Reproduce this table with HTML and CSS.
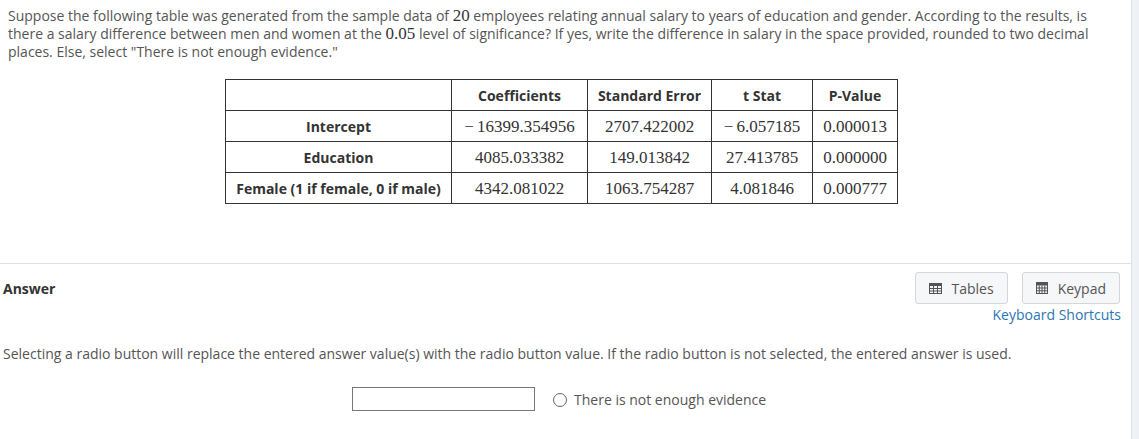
FILE: index.html
```html
<!DOCTYPE html>
<html>
<head>
<meta charset="utf-8">
<link rel="stylesheet" href="styles.css">
</head>
<body>
<div class="page">
  <main class="main">
    <section class="question">
      <p class="prompt">Suppose the following table was generated from the sample data of <span class="math">20</span> employees relating annual salary to years of education and gender. According to the results, is there a salary difference between men and women at the <span class="math">0.05</span> level of significance? If yes, write the difference in salary in the space provided, rounded to two decimal places. Else, select "There is not enough evidence."</p>
      <table class="reg">
        <thead>
          <tr>
            <th class="c-label"></th>
            <th class="c-coef">Coefficients</th>
            <th class="c-se">Standard Error</th>
            <th class="c-t">t Stat</th>
            <th class="c-p">P-Value</th>
          </tr>
        </thead>
        <tbody>
          <tr>
            <th>Intercept</th>
            <td>−&#8201;16399.354956</td>
            <td>2707.422002</td>
            <td>−&#8201;6.057185</td>
            <td>0.000013</td>
          </tr>
          <tr>
            <th>Education</th>
            <td>4085.033382</td>
            <td>149.013842</td>
            <td>27.413785</td>
            <td>0.000000</td>
          </tr>
          <tr>
            <th>Female (1 if female, 0 if male)</th>
            <td>4342.081022</td>
            <td>1063.754287</td>
            <td>4.081846</td>
            <td>0.000777</td>
          </tr>
        </tbody>
      </table>
    </section>
    <section class="answer">
      <div class="answer-head">
        <h2 class="answer-title">Answer</h2>
        <div class="tools">
          <div class="tool-buttons">
            <button class="tool-btn" type="button">
              <svg class="ico" width="13" height="11" viewBox="0 0 13 11" aria-hidden="true">
                <rect x="0.5" y="0.5" width="12" height="10" fill="none" stroke="#555" stroke-width="1"/>
                <rect x="0.5" y="0.5" width="12" height="2.5" fill="#555"/>
                <line x1="0.5" y1="5.5" x2="12.5" y2="5.5" stroke="#555"/>
                <line x1="0.5" y1="8" x2="12.5" y2="8" stroke="#555"/>
                <line x1="4.5" y1="0.5" x2="4.5" y2="10.5" stroke="#555"/>
                <line x1="8.5" y1="0.5" x2="8.5" y2="10.5" stroke="#555"/>
              </svg>
              <span>Tables</span>
            </button>
            <button class="tool-btn" type="button">
              <svg class="ico" width="12" height="12" viewBox="0 0 12 12" aria-hidden="true">
                <rect x="0.5" y="0.5" width="11" height="11" fill="none" stroke="#555"/>
                <rect x="0.5" y="0.5" width="11" height="3" fill="#555"/>
                <line x1="0.5" y1="6" x2="11.5" y2="6" stroke="#555"/>
                <line x1="0.5" y1="8.75" x2="11.5" y2="8.75" stroke="#555"/>
                <line x1="3.25" y1="3.5" x2="3.25" y2="11.5" stroke="#555"/>
                <line x1="6" y1="3.5" x2="6" y2="11.5" stroke="#555"/>
                <line x1="8.75" y1="3.5" x2="8.75" y2="11.5" stroke="#555"/>
              </svg>
              <span>Keypad</span>
            </button>
          </div>
          <a class="shortcuts" href="#">Keyboard Shortcuts</a>
        </div>
      </div>
      <p class="note">Selecting a radio button will replace the entered answer value(s) with the radio button value. If the radio button is not selected, the entered answer is used.</p>
      <div class="response">
        <input class="blank" type="text" aria-label="answer">
        <label class="radio"><span class="circle"></span><span>There is not enough evidence</span></label>
      </div>
    </section>
  </main>
  <aside class="side"></aside>
</div>
</body>
</html>
```

FILE: styles.css
```css
* { box-sizing: border-box; }
html, body { margin: 0; padding: 0; background: #fff; }
body {
  font-family: "Open Sans", "Liberation Sans", sans-serif;
  font-size: 14px;
  color: #555;
}
.page {
  display: flex;
  min-height: 439px;
}
.main {
  width: 1132px;
  border-right: 1px solid #dcdfe3;
}
.side {
  flex: 1;
  background: #eef2f6;
}
.question {
  padding: 7px 0 0 8px;
}
.prompt {
  margin: 0;
  line-height: 18px;
  width: 1090px;
}
.math {
  font-family: "Liberation Serif", "Times New Roman", serif;
  font-size: 17px;
  line-height: 1;
  color: #333;
}
.reg {
  border-collapse: collapse;
  margin: 18px 0 0 217px;
  font-family: "Liberation Serif", "Times New Roman", serif;
  font-size: 17px;
  color: #333;
}
.reg th, .reg td {
  border: 1px solid #333;
  height: 31px;
  padding: 0;
  text-align: center;
  vertical-align: middle;
}
.reg th {
  font-family: "Open Sans", "Liberation Sans", sans-serif;
  font-size: 14px;
  font-weight: 700;
  color: #333;
}
.reg td { padding-top: 1px; }
.c-label { width: 226px; }
.c-coef { width: 136px; }
.c-se { width: 124px; }
.c-t { width: 101px; }
.c-p { width: 85px; }
.answer {
  margin-top: 59px;
  border-top: 1px solid #e0e0e0;
}
.answer-head {
  display: flex;
  justify-content: space-between;
  align-items: flex-start;
  padding: 8px 11px 0 3px;
}
.answer-title {
  margin: 8px 0 0;
  font-size: 14px;
  font-weight: 700;
  color: #333;
  line-height: 18px;
}
.tools {
  display: flex;
  flex-direction: column;
  align-items: flex-end;
}
.tool-buttons {
  display: flex;
  gap: 14px;
}
.tool-btn {
  display: flex;
  align-items: center;
  gap: 10px;
  height: 32px;
  padding: 0 13px 0 13px;
  background: #f6f7f9;
  border: 1px solid #d3d7dc;
  border-radius: 3px;
  font-family: "Open Sans", "Liberation Sans", sans-serif;
  font-size: 14px;
  color: #555;
}
.tool-btn .ico { display: block; }
.shortcuts {
  margin-top: 1px;
  margin-right: -1px;
  color: #2a76b3;
  text-decoration: none;
  font-size: 14px;
  line-height: 20px;
}
.note {
  margin: 19px 0 0 3px;
  line-height: 20px;
}
.response {
  display: flex;
  align-items: center;
  margin: 23px 0 0 352px;
}
.blank {
  width: 183px;
  height: 24px;
  border: 1px solid #777;
  border-radius: 0;
  margin: 0;
  padding: 0;
  background: #fff;
}
.radio {
  display: flex;
  align-items: center;
  margin-left: 18px;
  gap: 7px;
  color: #555;
  font-size: 14px;
}
.circle {
  width: 14px;
  height: 14px;
  border: 1.5px solid #666;
  border-radius: 50%;
  margin-top: 2px;
}
```
